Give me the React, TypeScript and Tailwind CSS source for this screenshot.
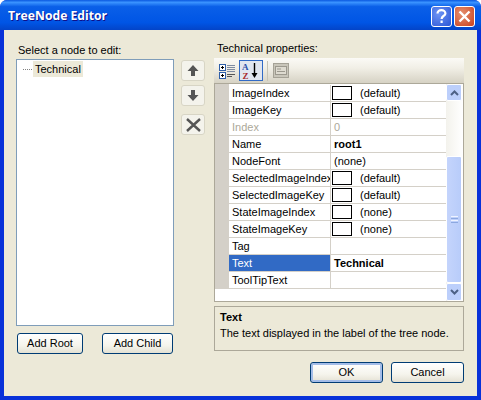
const rows: { name: string; value?: string; swatch?: boolean; bold?: boolean; disabled?: boolean; selected?: boolean }[] = [
  { name: 'ImageIndex', value: '(default)', swatch: true },
  { name: 'ImageKey', value: '(default)', swatch: true },
  { name: 'Index', value: '0', disabled: true },
  { name: 'Name', value: 'root1', bold: true },
  { name: 'NodeFont', value: '(none)' },
  { name: 'SelectedImageIndex', value: '(default)', swatch: true },
  { name: 'SelectedImageKey', value: '(default)', swatch: true },
  { name: 'StateImageIndex', value: '(none)', swatch: true },
  { name: 'StateImageKey', value: '(none)', swatch: true },
  { name: 'Tag' },
  { name: 'Text', value: 'Technical', bold: true, selected: true },
  { name: 'ToolTipText' },
]

function XpButton({ label, className, isDefault }: { label: string; className: string; isDefault?: boolean }) {
  return (
    <button
      type="button"
      className={`h-[21px] rounded-[3px] border border-[#003c74] bg-[linear-gradient(180deg,#ffffff,#f5f4ec_60%,#e4e1d3)] text-black ${isDefault ? 'shadow-[inset_0_0_0_2px_#a4bde8]' : ''} ${className}`}
    >
      {label}
    </button>
  )
}

function ToolButton({ children, className }: { children: React.ReactNode; className: string }) {
  return (
    <div className={`flex h-[21px] w-[24px] items-center justify-center rounded-[3px] border border-[#d8d5c5] bg-[#f4f3ec] ${className}`}>
      {children}
    </div>
  )
}

function TitleButtons() {
  return (
    <div className="flex gap-[2px]">
      <div className="flex h-[21px] w-[21px] items-center justify-center rounded-[3px] border border-white bg-[radial-gradient(circle_at_35%_35%,#6d94f4,#2a55d6)]">
        <svg width="11" height="15" viewBox="0 0 11 15" fill="none" stroke="white" strokeWidth="2.2">
          <path d="M1.5 4.5C1.5 2.5 3.2 1.2 5.4 1.2S9.4 2.5 9.4 4.4C9.4 6.8 5.6 6.8 5.6 10" />
          <path d="M5.6 11.5V14" />
        </svg>
      </div>
      <div className="flex h-[21px] w-[21px] items-center justify-center rounded-[3px] border border-white bg-[radial-gradient(circle_at_35%_35%,#e6906f,#c8401d)]">
        <svg width="13" height="13" viewBox="0 0 13 13" stroke="white" strokeWidth="2.4">
          <path d="M1.5 1.5L11.5 11.5M11.5 1.5L1.5 11.5" />
        </svg>
      </div>
    </div>
  )
}

function ToolbarIcons() {
  return (
    <div className="flex h-[25px] items-center bg-[linear-gradient(180deg,#fbfaf6,#f1efe6_40%,#d6d2c4)] pl-[5px]">
      <svg width="17" height="16" viewBox="0 0 17 16" className="mr-[3px]">
        <rect x="0.5" y="1.5" width="6" height="6" fill="#fff" stroke="#2f5fa8" />
        <rect x="0.5" y="9.5" width="6" height="6" fill="#fff" stroke="#2f5fa8" />
        <path d="M2 4.5h3M3.5 3v3M2 12.5h3M3.5 11v3" stroke="#000" />
        <path d="M8 2.5h8M8 4.5h8M8 6.5h8M8 8.5h8" stroke="#7f8ba0" />
        <path d="M8 11.5h8M8 13.5h5" stroke="#555" />
      </svg>
      <div className="flex h-[21px] w-[24px] items-center justify-center border border-[#316ac5] bg-[#e1e6f0]">
        <svg width="18" height="18" viewBox="0 0 18 18">
          <text x="0" y="8" fontSize="9" fontWeight="700" fill="#2a50a8" fontFamily="'Liberation Serif', serif">A</text>
          <text x="0.5" y="17" fontSize="9" fontWeight="700" fill="#a82a2a" fontFamily="'Liberation Serif', serif">Z</text>
          <path d="M12.5 1V13" stroke="#000" strokeWidth="1.4" />
          <path d="M9.5 11H15.5L12.5 16Z" fill="#000" />
        </svg>
      </div>
      <div className="ml-[4px] h-[20px] w-[1px] bg-[#c8c5b6]" />
      <svg width="16" height="15" viewBox="0 0 16 15" className="ml-[5px]">
        <rect x="0.5" y="0.5" width="15" height="14" fill="#c9c6ba" stroke="#a5a296" />
        <rect x="2.5" y="3.5" width="11" height="8" fill="#dedbd0" stroke="#9c998e" />
        <path d="M4 6h4M4 8.5h8" stroke="#9c998e" />
      </svg>
    </div>
  )
}

function Scrollbar() {
  return (
    <div className="flex w-[17px] flex-col bg-[linear-gradient(90deg,#f3f2ec,#ffffff)] pr-[1px]">
      <div className="flex h-[17px] items-center justify-center rounded-[2px] border border-white bg-[#bccffb]">
        <svg width="9" height="6" viewBox="0 0 9 6" fill="none" stroke="#4d6185" strokeWidth="2">
          <path d="M1 5L4.5 1.5L8 5" />
        </svg>
      </div>
      <div className="flex-1" />
      <div className="flex h-[127px] flex-col items-center justify-center gap-[1px] rounded-[2px] border border-white bg-[linear-gradient(90deg,#c4d4fc,#b8ccfa)]">
        <div className="h-[1px] w-[7px] bg-[#eef3ff]" />
        <div className="h-[1px] w-[7px] bg-[#8ca8e0]" />
        <div className="h-[1px] w-[7px] bg-[#eef3ff]" />
        <div className="h-[1px] w-[7px] bg-[#8ca8e0]" />
      </div>
      <div className="flex h-[18px] items-center justify-center rounded-[2px] border border-white bg-[#bccffb]">
        <svg width="9" height="6" viewBox="0 0 9 6" fill="none" stroke="#4d6185" strokeWidth="2">
          <path d="M1 1L4.5 4.5L8 1" />
        </svg>
      </div>
    </div>
  )
}

function PropertyGrid() {
  return (
    <div className="flex h-[219px] border border-[#aca899] bg-white">
      <div className="flex min-w-0 flex-1 flex-col">
        <div className="flex">
          <div className="w-[14px] bg-[#d4d0c8]" />
          <div className="min-w-0 flex-1 pt-[1px]">
            {rows.map((r) => (
              <div key={r.name} className="flex h-[17px] border-b border-[#d4d0c8]">
                <div
                  className={`w-[102px] shrink-0 overflow-hidden whitespace-nowrap border-r border-[#d4d0c8] pl-[3px] leading-[16px] ${r.selected ? 'bg-[#316ac5] text-white' : r.disabled ? 'text-[#aca899]' : 'text-black'}`}
                >
                  {r.name}
                </div>
                <div className={`flex min-w-0 flex-1 items-center leading-[16px] ${r.bold ? 'font-bold' : ''} ${r.disabled ? 'text-[#aca899]' : ''} ${r.swatch ? 'pl-[1px]' : 'pl-[3px]'}`}>
                  {r.swatch && <div className="mr-[8px] h-[14px] w-[20px] shrink-0 border border-black" />}
                  {r.value}
                </div>
              </div>
            ))}
          </div>
        </div>
      </div>
      <Scrollbar />
    </div>
  )
}

export default function App() {
  return (
    <div className="flex h-[400px] w-[481px] flex-col overflow-hidden rounded-t-[7px] bg-[#0831d9] font-['Liberation_Sans',sans-serif] text-[11px] text-black">
      <div className="flex h-[30px] shrink-0 items-center justify-between bg-[linear-gradient(180deg,#0a58e0,#3a93ff_8%,#0a5fe8_22%,#0055e5_75%,#0344c8)] pl-[8px] pr-[6px] pt-[3px]">
        <span className="font-['Open_Sans',sans-serif] text-[12.2px] font-bold text-white [text-shadow:1px_1px_#0f1089]">TreeNode Editor</span>
        <TitleButtons />
      </div>
      <div className="mx-[4px] mb-[4px] flex flex-1 bg-[#ece9d8] pl-[12px] pr-[13px]">
        <div className="flex w-[158px] flex-col pt-[13px]">
          <div className="h-[16px] pl-[2px] leading-[14px]">Select a node to edit:</div>
          <div className="h-[267px] border border-[#7f9db9] bg-white pl-[6px] pt-[1px]">
            <div className="flex items-center">
              <div className="mr-[1px] w-[9px] border-t border-dotted border-[#808080]" />
              <div className="flex h-[16px] items-center bg-[#ece9d8] px-[2px]">Technical</div>
            </div>
          </div>
          <div className="mt-[7px] flex pl-[1px]">
            <XpButton label="Add Root" className="w-[66px]" />
            <XpButton label="Add Child" className="ml-[19px] w-[71px]" />
          </div>
        </div>

        <div className="ml-[7px] flex w-[24px] flex-col pt-[30px]">
          <ToolButton className="mb-[4px]">
            <svg width="12" height="11" viewBox="0 0 12 11" fill="#555">
              <path d="M6 0L11.5 6H8V11H4V6H0.5Z" />
            </svg>
          </ToolButton>
          <ToolButton className="mb-[8px]">
            <svg width="12" height="11" viewBox="0 0 12 11" fill="#555">
              <path d="M6 11L11.5 5H8V0H4V5H0.5Z" />
            </svg>
          </ToolButton>
          <ToolButton className="">
            <svg width="15" height="14" viewBox="0 0 15 14" stroke="#555" strokeWidth="2.4">
              <path d="M1 1L14 13M14 1L1 13" />
            </svg>
          </ToolButton>
        </div>

        <div className="ml-[9px] flex min-w-0 flex-1 flex-col pt-[11px]">
          <div className="h-[17px] pl-[3px] leading-[14px]">Technical properties:</div>
          <ToolbarIcons />
          <PropertyGrid />
          <div className="mt-[4px] h-[45px] border border-[#aca899] pl-[5px] pt-[3px]">
            <div className="font-bold leading-[14px]">Text</div>
            <div className="mt-[2px] leading-[14px]">The text displayed in the label of the tree node.</div>
          </div>
          <div className="mt-[11px] flex justify-end gap-[8px]">
            <XpButton label="OK" className="w-[73px]" isDefault />
            <XpButton label="Cancel" className="w-[73px]" />
          </div>
        </div>
      </div>
    </div>
  )
}
